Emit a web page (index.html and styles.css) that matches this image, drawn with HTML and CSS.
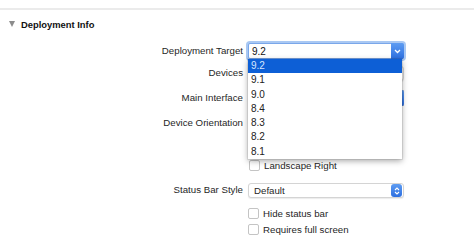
FILE: index.html
```html
<!DOCTYPE html>
<html lang="en">
<head>
    <meta charset="UTF-8">
    <meta name="viewport" content="width=device-width, initial-scale=1.0">
    <title>Deployment Info</title>
    <link rel="stylesheet" href="styles.css">
</head>
<body>
    <div class="rule"></div>
    <div class="section-head">
        <span class="disclosure"></span>
        <span class="section-title">Deployment Info</span>
    </div>

    <div class="form">
        <div class="row row-target">
            <label class="label">Deployment Target</label>
            <div class="control">
                <div class="combo focused">
                    <span class="combo-value">9.2</span>
                    <span class="combo-btn">
                        <svg width="7" height="5" viewBox="0 0 7 5"><path d="M1 1 L3.5 3.5 L6 1" fill="none" stroke="#fff" stroke-width="1.3"/></svg>
                    </span>
                </div>
                <ul class="menu">
                    <li class="menu-item selected">9.2</li>
                    <li class="menu-item">9.1</li>
                    <li class="menu-item">9.0</li>
                    <li class="menu-item">8.4</li>
                    <li class="menu-item">8.3</li>
                    <li class="menu-item">8.2</li>
                    <li class="menu-item">8.1</li>
                </ul>
            </div>
        </div>

        <div class="row row-devices">
            <label class="label">Devices</label>
            <div class="control">
                <div class="popup"><span class="popup-value"></span><span class="stepper"></span></div>
            </div>
        </div>

        <div class="row row-main">
            <label class="label">Main Interface</label>
            <div class="control">
                <div class="combo"><span class="combo-value"></span><span class="combo-btn"></span></div>
            </div>
        </div>

        <div class="row row-orient">
            <label class="label">Device Orientation</label>
            <div class="control checks">
                <div class="check"><span class="box"></span></div>
                <div class="check"><span class="box"></span></div>
                <div class="check"><span class="box"></span></div>
                <div class="check"><span class="box"></span>Landscape Right</div>
            </div>
        </div>

        <div class="row row-status">
            <label class="label">Status Bar Style</label>
            <div class="control">
                <div class="popup">
                    <span class="popup-value">Default</span>
                    <span class="stepper">
                        <svg width="6" height="10" viewBox="0 0 6 10"><path d="M1 4 L3 2 L5 4 M1 6 L3 8 L5 6" fill="none" stroke="#fff" stroke-width="1.1"/></svg>
                    </span>
                </div>
            </div>
        </div>

        <div class="row row-options">
            <div class="label"></div>
            <div class="control checks">
                <div class="check tall"><span class="box"></span>Hide status bar</div>
                <div class="check tall"><span class="box"></span>Requires full screen</div>
            </div>
        </div>
    </div>
</body>
</html>
```

FILE: styles.css
```css
body {
    margin: 0;
    background-color: #fff;
    font-family: "Liberation Sans", Arial, sans-serif;
    font-size: 9.7px;
    color: #1f1f1f;
}
.rule {
    margin-top: 8px;
    height: 2px;
    background-color: #ebebeb;
}
.section-head {
    display: flex;
    align-items: center;
    height: 28px;
    padding-left: 9px;
}
.disclosure {
    width: 0;
    height: 0;
    border-left: 3.5px solid transparent;
    border-right: 3.5px solid transparent;
    border-top: 6px solid #8c8c8c;
    margin-right: 6px;
}
.section-title {
    font-weight: bold;
    font-size: 9.4px;
    color: #111;
}
.form {
    padding-top: 5px;
}
.row {
    display: flex;
    align-items: flex-start;
}
.label {
    flex: none;
    width: 248px;
    text-align: right;
    line-height: 16px;
    padding-right: 5px;
    box-sizing: border-box;
}
.control {
    position: relative;
    width: 156px;
}
.row-target { height: 16px; margin-bottom: 6px; }
.row-devices { height: 16px; margin-bottom: 9px; }
.row-main { height: 16px; margin-bottom: 9px; }
.row-orient { margin-bottom: 10px; }
.row-orient .label { line-height: 14px; margin-top: 1px; }
.row-status { height: 16px; margin-bottom: 7px; }

.combo {
    position: relative;
    height: 16px;
    box-sizing: border-box;
    border: 1px solid #c8c8c8;
    background-color: #fff;
    display: flex;
    align-items: center;
}
.combo.focused {
    border-color: #7aa7ea;
    box-shadow: 0 0 0 2px #a9c8f3;
    border-radius: 2px;
}
.combo-value {
    padding-left: 3px;
    flex: 1;
    color: #111;
    font-size: 10px;
}
.combo-btn {
    width: 13px;
    height: 16px;
    margin: -1px -1px -1px 0;
    background: linear-gradient(#5e9cf2, #2d6fe0);
    border-radius: 0 2px 2px 0;
    display: flex;
    align-items: center;
    justify-content: center;
}
.menu {
    position: absolute;
    top: 16px;
    left: 0;
    width: 154px;
    margin: 0;
    padding: 0;
    list-style: none;
    background-color: #fff;
    box-shadow: 0 2px 6px rgba(0, 0, 0, 0.35), 0 0 0 1px rgba(0, 0, 0, 0.08);
    z-index: 10;
}
.menu-item {
    height: 14.3px;
    line-height: 14.3px;
    padding-left: 3px;
    color: #222;
    font-size: 10px;
}
.menu-item.selected {
    background-color: #0d5fd6;
    color: #d6e6ff;
}
.popup {
    height: 15px;
    box-sizing: border-box;
    border: 1px solid #d4d4d4;
    border-radius: 3px;
    background-color: #fff;
    box-shadow: 0 1px 1px rgba(0, 0, 0, 0.08);
    display: flex;
    align-items: center;
    margin-top: 1px;
}
.popup-value {
    flex: 1;
    padding-left: 5px;
}
.stepper {
    width: 11px;
    height: 13px;
    margin-right: 1px;
    border-radius: 3px;
    background: linear-gradient(#5e9cf2, #2d6fe0);
    display: flex;
    align-items: center;
    justify-content: center;
}
.checks {
    display: flex;
    flex-direction: column;
}
.check {
    display: flex;
    align-items: center;
    height: 14.3px;
    padding-left: 1px;
}
.check.tall {
    height: 16px;
    padding-left: 0;
}
.box {
    width: 9px;
    height: 9px;
    border: 1px solid #c4c4c4;
    border-radius: 2px;
    background-color: #fff;
    margin-right: 4px;
    flex: none;
}
```
